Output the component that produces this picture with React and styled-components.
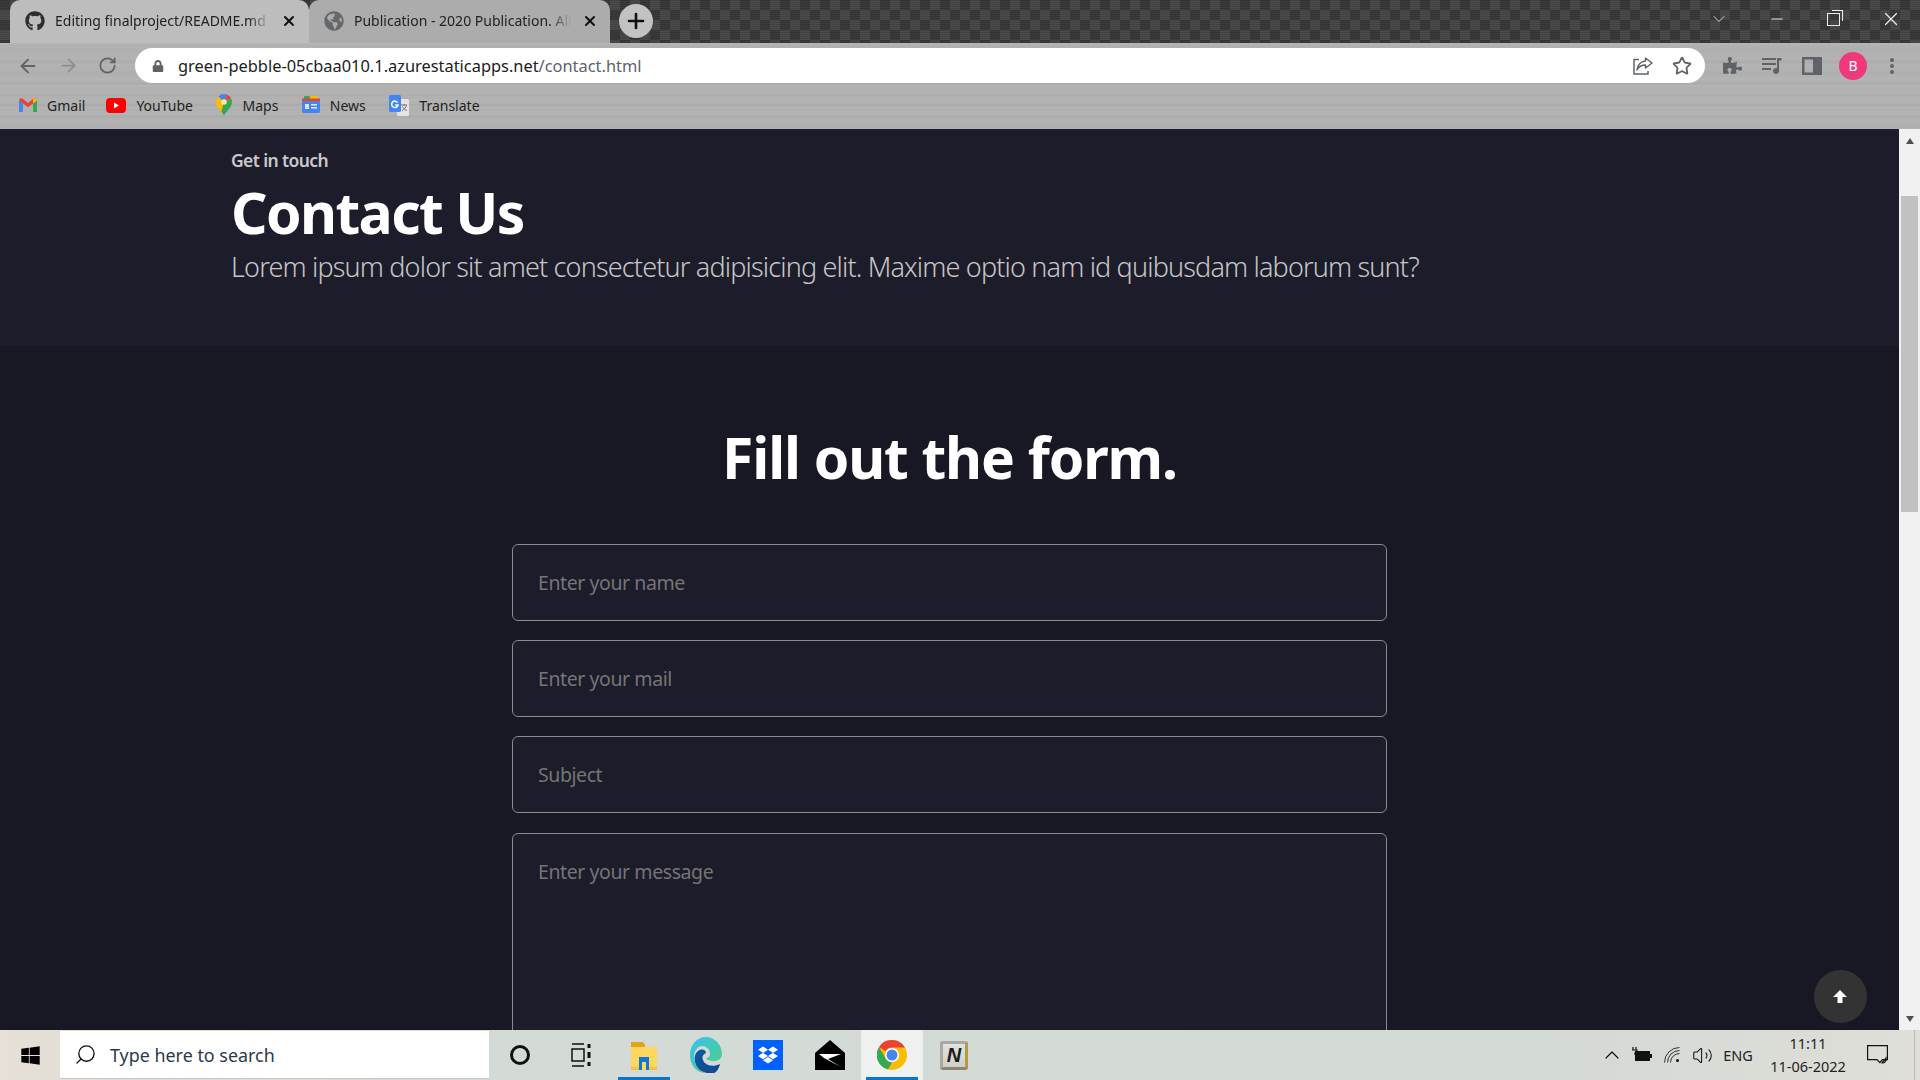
import React from "react";
import styled, { createGlobalStyle } from "styled-components";
import {
  FaGithub,
  FaGlobeAmericas,
  FaDropbox,
  FaPuzzlePiece,
  FaWindows,
  FaLock,
} from "react-icons/fa";
import {
  ArrowLeft,
  ArrowRight,
  RotateCw,
  Star,
  X,
  Plus,
  ChevronDown,
  ChevronUp,
  Minus,
  Search,
  Volume2,
} from "lucide-react";

const GlobalStyle = createGlobalStyle`
  html, body { margin: 0; padding: 0; height: 100%; overflow: hidden; }
  body { font-family: "Noto Sans", "Open Sans", sans-serif; background: #181825; }
  * { box-sizing: border-box; }
`;

const Screen = styled.div`
  width: 1920px;
  height: 1080px;
  display: flex;
  flex-direction: column;
  overflow: hidden;
`;

/* browser chrome */
const TabStrip = styled.div`
  height: 43px;
  flex: none;
  display: flex;
  align-items: flex-start;
  padding-left: 10px;
  background-color: #414141;
  background-image: repeating-linear-gradient(
      0deg,
      rgba(0, 0, 0, 0.1) 0 1px,
      transparent 1px 2px
    ),
    conic-gradient(#4a4a4a 0 25%, #3a3a3a 0 50%, #4a4a4a 0 75%, #3a3a3a 0);
  background-size: auto, 20px 20px;
`;

const Tab = styled.div`
  width: ${(p) => p.$width}px;
  height: 43px;
  display: flex;
  align-items: center;
  padding: 0 12px 2px 15px;
  border-radius: 10px 10px 0 0;
  background: ${(p) => (p.$active ? "#bdbdbd" : "#acacac")};
  svg.fav {
    flex: none;
    width: 20px;
    height: 20px;
    color: ${(p) => (p.$active ? "#2b2f33" : "#66696c")};
  }
  svg.close {
    flex: none;
    width: 16px;
    height: 16px;
    color: #111;
  }
`;

const TabTitle = styled.span`
  flex: 1;
  margin: 0 11px 0 10px;
  overflow: hidden;
  white-space: nowrap;
  font-size: 14px;
  color: #222;
  -webkit-mask-image: linear-gradient(90deg, #000 90%, transparent);
  mask-image: linear-gradient(90deg, #000 90%, transparent);
`;

const NewTab = styled.div`
  width: 34px;
  height: 34px;
  margin: 4px 0 0 9px;
  border-radius: 50%;
  background: #c2c2c2;
  display: grid;
  place-items: center;
  color: #111;
`;

const WindowControls = styled.div`
  margin-left: auto;
  height: 38px;
  display: flex;
  align-items: center;
  color: #eee;
`;

const WindowButton = styled.div`
  width: ${(p) => p.$width}px;
  display: grid;
  place-items: center;
`;

const RestoreIcon = styled.div`
  width: 13px;
  height: 13px;
  position: relative;
  border: 1.5px solid #eee;
  &::after {
    content: "";
    position: absolute;
    top: -4px;
    right: -4px;
    width: 10px;
    height: 10px;
    border-top: 1.5px solid #eee;
    border-right: 1.5px solid #eee;
  }
`;

const Toolbar = styled.div`
  flex: none;
  height: 86px;
  background-color: #b1b1b1;
  background-image: repeating-linear-gradient(
      0deg,
      rgba(255, 255, 255, 0.035) 0 2px,
      transparent 2px 7px
    ),
    repeating-linear-gradient(0deg, rgba(0, 0, 0, 0.025) 0 3px, transparent 3px 11px),
    repeating-linear-gradient(0deg, rgba(255, 255, 255, 0.03) 0 1px, transparent 1px 17px);
`;

const NavRow = styled.div`
  height: 45px;
  padding: 5px 0;
  display: flex;
  align-items: center;
`;

const NavButtons = styled.div`
  width: 135px;
  padding-left: 17px;
  display: flex;
  align-items: center;
  gap: 19px;
`;

const NavIcon = styled.span`
  display: inline-flex;
  color: ${(p) => (p.$dim ? "#8d8d8d" : "#5f6368")};
`;

const Omnibox = styled.div`
  width: 1570px;
  height: 35px;
  border-radius: 18px;
  background: #fff;
  display: flex;
  align-items: center;
  padding: 0 13px 0 17px;
  color: #5f6368;
`;

const Url = styled.div`
  flex: 1;
  margin-left: 14px;
  font-size: 16.4px;
  color: #202124;
  white-space: nowrap;
  span {
    color: #5f6368;
  }
`;

const OmniActions = styled.div`
  display: flex;
  align-items: center;
  gap: 19px;
  color: #5f6368;
`;

const ToolIcons = styled.div`
  flex: 1;
  display: flex;
  align-items: center;
  padding-left: 18px;
  gap: 20px;
  color: #5f6368;
`;

const Avatar = styled.div`
  width: 28px;
  height: 28px;
  margin-left: -3px;
  border-radius: 50%;
  background: #ee3a7c;
  color: #fff;
  font-size: 14px;
  display: grid;
  place-items: center;
`;

const Dots = styled.span`
  display: inline-flex;
  margin-left: 2px;
`;

const BookmarkBar = styled.div`
  height: 38px;
  margin-top: -2px;
  padding-left: 19px;
  display: flex;
  align-items: center;
  gap: 23.5px;
`;

const Bookmark = styled.div`
  display: flex;
  align-items: center;
  gap: 10px;
  font-size: 14px;
  color: #222;
  &:first-child {
    margin-right: -2.5px;
  }
`;

/* page */
const Viewport = styled.div`
  flex: 1;
  min-height: 0;
  position: relative;
  display: flex;
`;

const Page = styled.main`
  flex: 1;
  min-width: 0;
  overflow: hidden;
  background: #181825;
`;

const Banner = styled.header`
  height: 217px;
  padding: 21px 0 0 231px;
  background: #1c1c2a;
`;

const Eyebrow = styled.div`
  font-size: 17.5px;
  line-height: 20px;
  font-weight: 600;
  color: #c9c9c9;
  letter-spacing: -0.6px;
`;

const Title = styled.h1`
  margin: 9px 0 0;
  font-size: 57px;
  line-height: 66px;
  font-weight: 700;
  color: #fff;
  letter-spacing: -1.6px;
`;

const Lead = styled.p`
  margin: 4px 0 0;
  font-size: 27px;
  line-height: 36px;
  font-weight: 300;
  color: #c6c6c6;
  white-space: nowrap;
  letter-spacing: -0.84px;
`;

const FormSection = styled.section`
  padding-top: 74px;
`;

const FormTitle = styled.h2`
  margin: 0;
  text-align: center;
  font-size: 57px;
  line-height: 74px;
  font-weight: 700;
  color: #fff;
  letter-spacing: -1.1px;
`;

const Form = styled.form`
  width: 875px;
  margin: 50px auto 0;
  display: flex;
  flex-direction: column;
  gap: 19.2px;
`;

const fieldStyles = `
  width: 100%;
  border: 1.4px solid #8b8b8b;
  border-radius: 6px;
  background: #1c1c2a;
  padding: 0 25px;
  font-family: "Noto Sans", sans-serif;
  font-size: 19.5px;
  letter-spacing: -0.42px;
  color: #fff;
  outline: none;
  &::placeholder { color: #757575; opacity: 1; }
`;

const Field = styled.input`
  ${fieldStyles}
  height: 77px;
`;

const MessageField = styled.textarea`
  ${fieldStyles}
  height: 300px;
  padding-top: 24px;
  resize: none;
`;

const ToTop = styled.button`
  position: absolute;
  right: 53.5px;
  bottom: 7.5px;
  width: 53px;
  height: 53px;
  border: none;
  border-radius: 50%;
  background: #333;
  color: #fff;
  display: grid;
  place-items: center;
`;

const Scrollbar = styled.div`
  width: 21px;
  flex: none;
  background: #f1f1f1;
  display: flex;
  flex-direction: column;
  align-items: center;
  padding-top: 9px;
`;

const ScrollUp = styled.div`
  width: 0;
  height: 0;
  border-left: 4.5px solid transparent;
  border-right: 4.5px solid transparent;
  border-bottom: 6px solid #505050;
`;

const ScrollDown = styled(ScrollUp)`
  border-bottom: none;
  border-top: 6px solid #505050;
  margin-top: auto;
  margin-bottom: 8px;
`;

const Thumb = styled.div`
  width: 17px;
  height: 316px;
  margin-top: 52px;
  background: #c1c1c1;
`;

/* taskbar */
const Taskbar = styled.footer`
  flex: none;
  height: 50px;
  display: flex;
  align-items: stretch;
  background: linear-gradient(90deg, #e6e0d6 0, #d4dad5 25%, #d3d9d4 80%, #dfded8 100%);
`;

const StartButton = styled.div`
  width: 60px;
  display: grid;
  place-items: center;
  color: #000;
`;

const SearchBox = styled.div`
  width: 429px;
  margin: 1px 0;
  background: #fff;
  border-bottom: 1px solid #c9c9c9;
  display: flex;
  align-items: center;
  padding-left: 14px;
  gap: 13px;
  font-size: 17.9px;
  color: #2b3a4a;
  svg {
    transform: scaleX(-1);
    color: #111;
  }
`;

const TaskSlot = styled.div`
  width: 62px;
  position: relative;
  display: grid;
  place-items: center;
  background: ${(p) => (p.$active ? "#eef1ef" : "transparent")};
  &::after {
    content: "";
    display: ${(p) => (p.$running ? "block" : "none")};
    position: absolute;
    left: 5px;
    right: 5px;
    bottom: 0;
    height: 3px;
    background: #0078d4;
  }
`;

const CortanaRing = styled.div`
  width: 20px;
  height: 20px;
  border-radius: 50%;
  border: 3px solid #111;
`;

const DropboxTile = styled.div`
  width: 30px;
  height: 30px;
  background: #0061fe;
  color: #fff;
  display: grid;
  place-items: center;
`;

const AppTile = styled.div`
  width: 28px;
  height: 29px;
  border-radius: 3px;
  background: linear-gradient(#e2e2df, #cfcfca);
  border: 3px solid #a9a9a4;
  border-right-color: #b59a3e;
  border-bottom-color: #8d8470;
  display: grid;
  place-items: center;
  font-family: "Liberation Sans", sans-serif;
  font-weight: 700;
  font-style: italic;
  font-size: 20px;
  color: #1b1b1b;
`;

const Tray = styled.div`
  margin-left: auto;
  display: flex;
  align-items: center;
  color: #111;
`;

const TrayIcon = styled.div`
  width: 30px;
  display: grid;
  place-items: center;
`;

const TrayText = styled.div`
  width: 42px;
  font-size: 14.5px;
  color: #222;
  text-align: center;
`;

const Clock = styled.div`
  width: 98px;
  text-align: center;
  font-size: 14.5px;
  line-height: 23px;
  color: #222;
`;

const NotifyButton = styled.div`
  width: 58px;
  height: 100%;
  margin-right: 5px;
  padding-right: 16px;
  display: grid;
  place-items: center;
  border-right: 1px solid #bbb;
`;

const GmailIcon = () => (
  <svg width="18" height="14" viewBox="0 0 18 14">
    <path d="M0 2.5V14h4V5.5z" fill="#4285f4" />
    <path d="M14 5.5V14h4V2.5z" fill="#34a853" />
    <path d="M0 2.5 C0 .5 2 -.5 3.5 .6L9 5l5.5-4.4C16-.5 18 .5 18 2.5L14 5.5 9 9.3 4 5.5z" fill="#ea4335" />
    <path d="M14 1.6l.5-1C16-.5 18 .5 18 2.5L14 5.5z" fill="#fbbc04" />
  </svg>
);

const YoutubeIcon = () => (
  <svg width="20" height="15" viewBox="0 0 20 15">
    <rect width="20" height="15" rx="4" fill="#f00" />
    <path d="M8 4.5v6l5-3z" fill="#fff" />
  </svg>
);

const MapsIcon = () => (
  <svg width="16" height="22" viewBox="0 0 16 22">
    <path d="M8 22c-1-4-8-8-8-14a8 8 0 0 1 2.4-5.6L8 8z" fill="#fbbc04" />
    <path d="M2.4 2.4A8 8 0 0 1 8 0c1.2 0 2.3.3 3.3.8L8 8z" fill="#4285f4" />
    <path d="M11.3.8A8 8 0 0 1 15 4.2L8 8z" fill="#ea4335" />
    <path d="M15 4.2c.7 1.100 1 2.400 1 3.800 0 6-7 10-8 14-.4-1.500-1.500-3-2.600-4.400L8 8z" fill="#34a853" />
    <circle cx="8" cy="8" r="2.800" fill="#f5e7b0" />
  </svg>
);

const NewsIcon = () => (
  <svg width="18" height="18" viewBox="0 0 18 18">
    <rect x="2" y="0" width="6" height="6" rx="1" fill="#34a853" />
    <rect x="8" y="0" width="8" height="6" rx="1" fill="#fbbc04" />
    <rect x="0" y="2.500" width="18" height="3" fill="#ea4335" />
    <rect x="0" y="5" width="18" height="12" rx="1.500" fill="#4285f4" />
    <rect x="3" y="8" width="4" height="5" fill="#dbe7fd" />
    <rect x="9" y="8" width="6" height="1.500" fill="#dbe7fd" />
    <rect x="9" y="11" width="6" height="1.500" fill="#dbe7fd" />
  </svg>
);

const TranslateIcon = () => (
  <svg width="20" height="21" viewBox="0 0 20 21">
    <rect x="8" y="4" width="12" height="17" rx="1.500" fill="#e4e4e4" />
    <path d="M12 10h6M15 9v1.500M13 15.500c2.500-1 4-3 4.500-5.500M13.500 11.500c.8 2 2.500 3.500 4.500 4" stroke="#777" fill="none" />
    <rect x="0" y="0" width="12" height="17" rx="1.500" fill="#4285f4" />
    <path d="M8.500 7.500A3.200 3.200 0 1 0 9 10H6.200" stroke="#fff" strokeWidth="1.500" fill="none" />
  </svg>
);

const ShareIcon = () => (
  <svg width="20" height="18" viewBox="0 0 20 18" fill="none" stroke="currentColor" strokeWidth="1.500">
    <path d="M6 2.500H1v14.500h14v-3" />
    <path d="M12.500 1l6.500 5-6.500 5V8C8.500 8 5.500 10 4 13c.5-5 4-8.500 8.500-9z" strokeLinejoin="round" />
  </svg>
);

const MediaIcon = () => (
  <svg width="20" height="18" viewBox="0 0 20 18" fill="currentColor">
    <path d="M0 1h14v2H0zM0 6h14v2H0zM0 11h9v2H0z" />
    <path d="M15 1h4.500v2.500H17V14a3 3 0 1 1-2-2.800z" />
  </svg>
);

const SidePanelIcon = () => (
  <svg width="20" height="18" viewBox="0 0 20 18" fill="currentColor">
    <path fillRule="evenodd" d="M0 0h20v18H0zM2.500 2.500v13H11v-13z" />
  </svg>
);

const DotsIcon = () => (
  <svg width="6" height="18" viewBox="0 0 6 18" fill="currentColor">
    <circle cx="3" cy="3" r="2" />
    <circle cx="3" cy="9" r="2" />
    <circle cx="3" cy="15" r="2" />
  </svg>
);

const UpArrowIcon = () => (
  <svg width="14" height="13" viewBox="0 0 14 13" fill="currentColor">
    <path d="M7 0l7 7H9.500v6h-5V7H0z" />
  </svg>
);

const TaskViewIcon = () => (
  <svg width="22" height="24" viewBox="0 0 22 24" fill="none" stroke="#111" strokeWidth="1.500">
    <path d="M1 1h12M1 23h12" />
    <rect x="1" y="6" width="12" height="12" />
    <path d="M18 1v4M18 9v6M18 19v4" strokeWidth="3" />
  </svg>
);

const ExplorerIcon = () => (
  <svg width="28" height="29" viewBox="0 0 28 29">
    <path d="M1 1h12l2 3v5H1z" fill="#e3a21a" />
    <path d="M1 6h26v23H1z" fill="#ffd75e" />
    <path d="M9 16h10v13h-3v-8h-4v8H9z" fill="#0f78d4" />
    <path d="M1 26h8v3H1zM19 26h8v3h-8z" fill="#f5c242" />
  </svg>
);

const EdgeIcon = () => (
  <svg width="32" height="36" viewBox="0 0 32 36">
    <defs>
      <linearGradient id="edgeA" x1="0" y1="0" x2="1" y2="1">
        <stop offset="0" stopColor="#35c1f1" />
        <stop offset="1" stopColor="#52d17c" />
      </linearGradient>
      <linearGradient id="edgeB" x1="0" y1="0" x2="1" y2="1">
        <stop offset="0" stopColor="#0c59a4" />
        <stop offset="1" stopColor="#114a8b" />
      </linearGradient>
    </defs>
    <path d="M16 36C6 36 0 28 0 18S7 0 16 0c9 0 16 8 16 17 0 5-4 7-8 7-5 0-8-2-8-3 0 0 4 0 4-4 0-5-4-8-8-8-5 0-8 6-8 11 0 8 8 16 12 16z" fill="url(#edgeA)" />
    <path d="M24 36c-5 1-12 0-16-5C4 26 3 18 8 14c4-3 8-1 8 2-5 2-4 7-1 10 3 3 9 4 15 1-1 4-3 8-6 9z" fill="url(#edgeB)" />
  </svg>
);

const MailIcon = () => (
  <svg width="30" height="30" viewBox="0 0 30 30">
    <path d="M15 0l15 13v17H0V13z" fill="#000" />
    <path d="M4 14h22L13 19l13 8-17-9z" fill="#fff" />
  </svg>
);

const ChromeIcon = () => (
  <svg width="30" height="30" viewBox="0 0 30 30">
    <circle cx="15" cy="15" r="15" fill="#fbbc04" />
    <path d="M15 0a15 15 0 0 1 13 7.500H15a7.500 7.500 0 0 0-6.500 3.750L2 7A15 15 0 0 1 15 0z" fill="#ea4335" />
    <path d="M2 7l6.500 11.250A7.500 7.500 0 0 0 15 22.500L11 29.500A15 15 0 0 1 2 7z" fill="#34a853" />
    <circle cx="15" cy="15" r="7" fill="#fff" />
    <circle cx="15" cy="15" r="5.500" fill="#4285f4" />
  </svg>
);

const BatteryIcon = () => (
  <svg width="20" height="16" viewBox="0 0 20 16">
    <path d="M1 0v3M4 0v3M0 3h5v3H3v2" stroke="#111" strokeWidth="1.200" fill="none" />
    <rect x="3" y="4" width="15" height="10" fill="#111" />
    <rect x="18" y="7" width="2" height="4" fill="#111" />
  </svg>
);

const WifiIcon = () => (
  <svg width="16" height="16" viewBox="0 0 16 16" fill="none" stroke="#333" strokeWidth="1">
    <path d="M.5 15.500A15 15 0 0 1 15.500 .5M3.500 15.500A12 12 0 0 1 15.500 3.500M6.500 15.500a9 9 0 0 1 9-9" />
    <circle cx="13.500" cy="13.500" r="1.500" fill="#111" stroke="none" />
  </svg>
);

const NotifyIcon = () => (
  <svg width="21" height="20" viewBox="0 0 21 20" fill="none" stroke="#111" strokeWidth="1.200">
    <path d="M.6.600h19.800v14h-5l-2.500 3-3-3H.6z" />
    <path d="M15 18a4 4 0 0 0 4-5c-1 2-3 3-4 5z" fill="#d3d9d4" />
  </svg>
);

const bookmarks = [
  { label: "Gmail", icon: <GmailIcon /> },
  { label: "YouTube", icon: <YoutubeIcon /> },
  { label: "Maps", icon: <MapsIcon /> },
  { label: "News", icon: <NewsIcon /> },
  { label: "Translate", icon: <TranslateIcon /> },
];

const App = () => {
  return (
    <Screen>
      <GlobalStyle />
      <TabStrip>
        <Tab $active $width={299}>
          <FaGithub className="fav" />
          <TabTitle>Editing finalproject/README.md</TabTitle>
          <X className="close" strokeWidth={3} />
        </Tab>
        <Tab $width={301}>
          <FaGlobeAmericas className="fav" />
          <TabTitle>Publication - 2020 Publication. All</TabTitle>
          <X className="close" strokeWidth={3} />
        </Tab>
        <NewTab>
          <Plus size={24} strokeWidth={2.6} />
        </NewTab>
        <WindowControls>
          <WindowButton $width={62}>
            <ChevronDown size={20} strokeWidth={1} />
          </WindowButton>
          <WindowButton $width={54}>
            <Minus size={18} strokeWidth={1.4} />
          </WindowButton>
          <WindowButton $width={58}>
            <RestoreIcon />
          </WindowButton>
          <WindowButton $width={58}>
            <X size={22} strokeWidth={1.3} />
          </WindowButton>
        </WindowControls>
      </TabStrip>

      <Toolbar>
        <NavRow>
          <NavButtons>
            <NavIcon>
              <ArrowLeft size={22} strokeWidth={2} />
            </NavIcon>
            <NavIcon $dim>
              <ArrowRight size={21} strokeWidth={2} />
            </NavIcon>
            <NavIcon>
              <RotateCw size={19} strokeWidth={2.2} />
            </NavIcon>
          </NavButtons>
          <Omnibox>
            <FaLock size={12} />
            <Url>
              green-pebble-05cbaa010.1.azurestaticapps.net<span>/contact.html</span>
            </Url>
            <OmniActions>
              <ShareIcon />
              <Star size={20} strokeWidth={2.2} />
            </OmniActions>
          </Omnibox>
          <ToolIcons>
            <FaPuzzlePiece size={19} />
            <MediaIcon />
            <SidePanelIcon />
            <Avatar>B</Avatar>
            <Dots>
              <DotsIcon />
            </Dots>
          </ToolIcons>
        </NavRow>
        <BookmarkBar>
          {bookmarks.map((item) => (
            <Bookmark key={item.label}>
              {item.icon}
              {item.label}
            </Bookmark>
          ))}
        </BookmarkBar>
      </Toolbar>

      <Viewport>
        <Page>
          <Banner>
            <Eyebrow>Get in touch</Eyebrow>
            <Title>Contact Us</Title>
            <Lead>
              Lorem ipsum dolor sit amet consectetur adipisicing elit. Maxime optio nam id quibusdam
              laborum sunt?
            </Lead>
          </Banner>
          <FormSection>
            <FormTitle>Fill out the form.</FormTitle>
            <Form>
              <Field type="text" placeholder="Enter your name" />
              <Field type="email" placeholder="Enter your mail" />
              <Field type="text" placeholder="Subject" />
              <MessageField placeholder="Enter your message" />
            </Form>
          </FormSection>
        </Page>
        <Scrollbar>
          <ScrollUp />
          <Thumb />
          <ScrollDown />
        </Scrollbar>
        <ToTop aria-label="Back to top">
          <UpArrowIcon />
        </ToTop>
      </Viewport>

      <Taskbar>
        <StartButton>
          <FaWindows size={21} />
        </StartButton>
        <SearchBox>
          <Search size={23} strokeWidth={1.4} />
          Type here to search
        </SearchBox>
        <TaskSlot>
          <CortanaRing />
        </TaskSlot>
        <TaskSlot>
          <TaskViewIcon />
        </TaskSlot>
        <TaskSlot $running>
          <ExplorerIcon />
        </TaskSlot>
        <TaskSlot>
          <EdgeIcon />
        </TaskSlot>
        <TaskSlot>
          <DropboxTile>
            <FaDropbox size={20} />
          </DropboxTile>
        </TaskSlot>
        <TaskSlot>
          <MailIcon />
        </TaskSlot>
        <TaskSlot $active $running>
          <ChromeIcon />
        </TaskSlot>
        <TaskSlot>
          <AppTile>N</AppTile>
        </TaskSlot>
        <Tray>
          <TrayIcon>
            <ChevronUp size={24} strokeWidth={1.2} />
          </TrayIcon>
          <TrayIcon>
            <BatteryIcon />
          </TrayIcon>
          <TrayIcon>
            <WifiIcon />
          </TrayIcon>
          <TrayIcon>
            <Volume2 size={21} strokeWidth={1.2} />
          </TrayIcon>
          <TrayText>ENG</TrayText>
          <Clock>
            11:11
            <br />
            11-06-2022
          </Clock>
          <NotifyButton>
            <NotifyIcon />
          </NotifyButton>
        </Tray>
      </Taskbar>
    </Screen>
  );
};

export default App;
